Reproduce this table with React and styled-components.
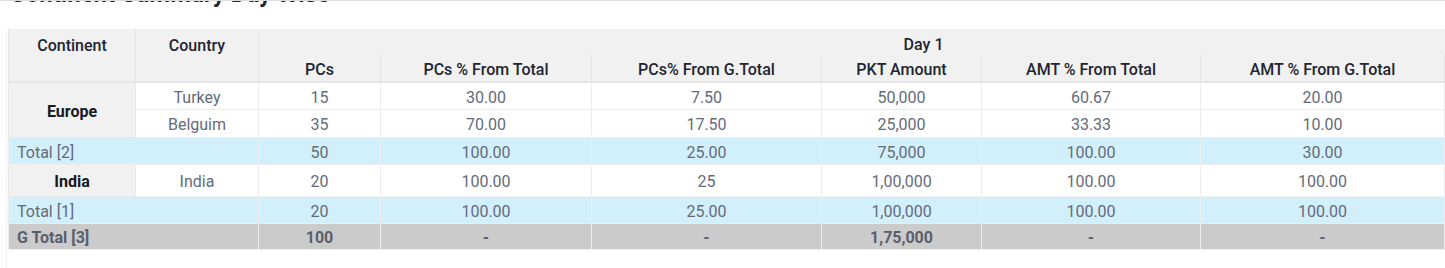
import React from "react";
import styled, { createGlobalStyle } from "styled-components";

const GlobalStyle = createGlobalStyle`
  html, body {
    margin: 0;
    padding: 0;
    background: #ffffff;
    overflow: hidden;
  }
  body {
    font-family: Roboto, "Liberation Sans", Arial, sans-serif;
  }
`;

const Page = styled.div`
  border-top: 1px solid #dcdcdc;
  width: 1445px;
  height: 267px;
  overflow: hidden;
`;

const Heading = styled.h2`
  margin: -21px 0 0 10px;
  font-size: 24px;
  line-height: 28px;
  font-weight: 700;
  color: #1d2433;
  white-space: nowrap;
`;

const Card = styled.div`
  margin: 21px 0 0 6px;
  padding-left: 1px;
  border-left: 1px solid #f3f3f3;
  height: 240px;
  overflow: hidden;
`;

const Table = styled.table`
  border-collapse: collapse;
  table-layout: fixed;
  width: 1580px;
  font-size: 16px;
`;

const HeadRow = styled.tr`
  height: ${(p) => p.$h}px;
`;

const HeadCell = styled.th`
  background: #f1f1f1;
  color: #1f2532;
  font-weight: 500;
  text-align: center;
  vertical-align: ${(p) => (p.$top ? "top" : "middle")};
  padding: ${(p) => (p.$top ? "7px 4px 0" : "2px 4px 0")};
  border-left: 1px solid #e4e4e4;
  border-right: 1px solid #e4e4e4;
  border-bottom: 2px solid #e6e6e6;
  white-space: nowrap;
  &.group {
    border-bottom: none;
    padding-top: 5px;
  }
`;

const Row = styled.tr`
  height: ${(p) => p.$h}px;
  background: ${(p) =>
    p.$kind === "total" ? "#d2effc" : p.$kind === "grand" ? "#cbcbcb" : "#ffffff"};
  color: ${(p) => (p.$kind === "grand" ? "#5a5f6d" : "#646b7a")};
  font-weight: ${(p) => (p.$kind === "grand" ? 700 : 400)};
`;

const Cell = styled.td`
  text-align: center;
  vertical-align: middle;
  padding: 3px 4px 0;
  border: 1px solid #ededed;
  white-space: nowrap;
`;

const GroupCell = styled(Cell)`
  background: #f1f1f1;
  color: #16191f;
  font-weight: 700;
  border-color: #e8e8e8;
`;

const LabelCell = styled(Cell)`
  text-align: left;
  padding-left: 8px;
`;

const widths = [127, 123, 122, 211, 230, 160, 219, 244, 144];

const subHeads = [
  "PCs",
  "PCs % From Total",
  "PCs% From G.Total",
  "PKT Amount",
  "AMT % From Total",
  "AMT % From G.Total",
  "",
];

const groups = [
  {
    name: "Europe",
    rows: [
      { country: "Turkey", h: 27, values: ["15", "30.00", "7.50", "50,000", "60.67", "20.00"] },
      { country: "Belguim", h: 28, values: ["35", "70.00", "17.50", "25,000", "33.33", "10.00"] },
    ],
    total: { label: "Total [2]", h: 27, values: ["50", "100.00", "25.00", "75,000", "100.00", "30.00"] },
  },
  {
    name: "India",
    rows: [
      { country: "India", h: 32, values: ["20", "100.00", "25", "1,00,000", "100.00", "100.00"] },
    ],
    total: { label: "Total [1]", h: 27, values: ["20", "100.00", "25.00", "1,00,000", "100.00", "100.00"] },
  },
];

const grand = { label: "G Total [3]", values: ["100", "-", "-", "1,75,000", "-", "-"] };

const Values = ({ values }) => (
  <>
    {values.map((v, i) => (
      <Cell key={i}>{v}</Cell>
    ))}
    <Cell />
  </>
);

export default function App() {
  return (
    <>
      <GlobalStyle />
      <Page>
        <Heading>Continent Summary Day Wise</Heading>
        <Card>
          <Table>
            <colgroup>
              {widths.map((w, i) => (
                <col key={i} style={{ width: w }} />
              ))}
            </colgroup>
            <thead>
              <HeadRow $h={26}>
                <HeadCell rowSpan={2} $top>
                  Continent
                </HeadCell>
                <HeadCell rowSpan={2} $top>
                  Country
                </HeadCell>
                <HeadCell colSpan={7} className="group">
                  Day 1
                </HeadCell>
              </HeadRow>
              <HeadRow $h={27}>
                {subHeads.map((h, i) => (
                  <HeadCell key={i}>{h}</HeadCell>
                ))}
              </HeadRow>
            </thead>
            <tbody>
              {groups.map((g) => (
                <React.Fragment key={g.name}>
                  {g.rows.map((r, i) => (
                    <Row key={r.country} $h={r.h}>
                      {i === 0 && <GroupCell rowSpan={g.rows.length}>{g.name}</GroupCell>}
                      <Cell>{r.country}</Cell>
                      <Values values={r.values} />
                    </Row>
                  ))}
                  <Row $kind="total" $h={g.total.h}>
                    <LabelCell colSpan={2}>{g.total.label}</LabelCell>
                    <Values values={g.total.values} />
                  </Row>
                </React.Fragment>
              ))}
              <Row $kind="grand" $h={26}>
                <LabelCell colSpan={2}>{grand.label}</LabelCell>
                <Values values={grand.values} />
              </Row>
            </tbody>
          </Table>
        </Card>
      </Page>
    </>
  );
}
